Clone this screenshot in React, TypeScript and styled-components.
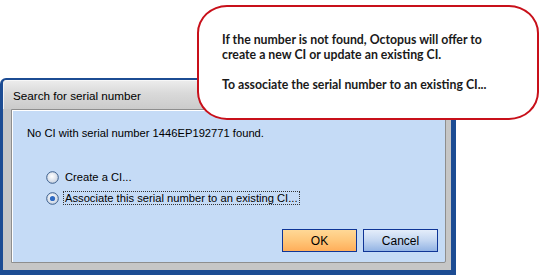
import styled, { createGlobalStyle } from "styled-components";
import { FC } from "react";

const GlobalStyle = createGlobalStyle`
    html, body {
        margin: 0;
        padding: 0;
        background: #ffffff;
    }
`

const Radio: FC<{ checked?: boolean }> = ({checked}) => (<RadioSvg width={13} height={13} viewBox="0 0 13 13">
    <defs>
        <radialGradient id={checked ? "rg-on" : "rg-off"} cx="0.45" cy="0.4" r="0.6">
            <stop offset="0" stopColor="#ffffff"/>
            <stop offset="1" stopColor="#c9d3e2"/>
        </radialGradient>
    </defs>
    <circle cx={6.5} cy={6.5} r={5.8} fill={`url(#${checked ? "rg-on" : "rg-off"})`} stroke="#3c5f8c" strokeWidth={1}/>
    {checked && <circle cx={6.5} cy={6.5} r={2.6} fill="#2f6ac2"/>}
</RadioSvg>)

export default function App() {
    return (<>
        <GlobalStyle/>
        <Page>
            <Window>
                <TitleBar>Search for serial number</TitleBar>
                <Panel>
                    <Message>No CI with serial number 1446EP192771 found.</Message>
                    <Options>
                        <Option>
                            <Radio/>
                            <OptionLabel>Create a CI...</OptionLabel>
                        </Option>
                        <Option>
                            <Radio checked/>
                            <OptionLabel $focused>Associate this serial number to an existing CI...</OptionLabel>
                        </Option>
                    </Options>
                    <Buttons>
                        <Button $primary>OK</Button>
                        <Button>Cancel</Button>
                    </Buttons>
                </Panel>
            </Window>
            <Callout>
                <p>If the number is not found, Octopus will offer to<br/>create a new CI or update an existing CI.</p>
                <p>To associate the serial number to an existing CI...</p>
            </Callout>
        </Page>
    </>)
}

const Page = styled.div`
    position: relative;
    width: 557px;
    height: 275px;
    overflow: hidden;
    padding-top: 78px;
    box-sizing: border-box;
    background: #ffffff;
`

const Window = styled.div`
    width: 456px;
    height: 197px;
    box-sizing: border-box;
    border-style: solid;
    border-color: #1c4c93;
    border-width: 2px 5px 5px 3px;
    border-top-left-radius: 6px;
    background: #c6c6c6;
    padding: 0 5px 0 8px;
    display: flex;
    flex-direction: column;
`

const TitleBar = styled.div`
    height: 29px;
    margin: 0 -5px 0 -8px;
    padding-left: 9px;
    display: flex;
    align-items: center;
    border-top-left-radius: 4px;
    background: linear-gradient(#ececec, #d9d9d9 45%, #cbcbcb);
    border-top: 1px solid #f7f7f7;
    border-left: 1px solid #f2f2f2;
    box-sizing: border-box;
    font-family: "Liberation Sans", Arial, sans-serif;
    font-size: 11.7px;
    color: #000;
`

const Panel = styled.div`
    height: 154px;
    flex: none;
    box-sizing: border-box;
    background: #c5dbf6;
    border: 1px solid #8e8e8e;
    border-bottom-right-radius: 2px;
    box-shadow: inset 1px 1px 0 #ffffff;
    padding: 16px 7px 0 15px;
    display: flex;
    flex-direction: column;
    font-family: "Liberation Sans", Arial, sans-serif;
    font-size: 11.2px;
    color: #000;
`

const Message = styled.div`
    line-height: 15px;
`

const Options = styled.div`
    margin-top: 29px;
    padding-left: 19px;
    display: flex;
    flex-direction: column;
    gap: 7px;
`

const Option = styled.div`
    display: flex;
    align-items: center;
    gap: 5px;
    height: 14px;
`

const RadioSvg = styled.svg`
    flex: none;
`

const OptionLabel = styled.span<{ $focused?: boolean }>`
    padding: 0 1px;
    line-height: 12px;
    outline: ${p => p.$focused ? "1px dotted #333" : "none"};
`

const Buttons = styled.div`
    margin-top: 24px;
    display: flex;
    justify-content: flex-end;
    gap: 6px;
`

const Button = styled.div<{ $primary?: boolean }>`
    width: 75px;
    height: 23px;
    box-sizing: border-box;
    display: flex;
    align-items: center;
    justify-content: center;
    font-size: 12px;
    border: 1px solid #0f3596;
    background: ${p => p.$primary
        ? "linear-gradient(#ffd896, #ffc679 50%, #ffae5a)"
        : "linear-gradient(#e4edfa, #c3d6f1 50%, #93b4e4)"};
    color: #000;
`

const Callout = styled.div`
    position: absolute;
    left: 197px;
    top: 5px;
    width: 342px;
    height: 115px;
    box-sizing: border-box;
    background: #ffffff;
    border: 2px solid #c8101a;
    border-radius: 30px / 28px;
    padding: 25px 0 0 23px;
    font-family: Lato, "Open Sans", sans-serif;
    font-weight: 700;
    font-size: 12.3px;
    line-height: 15px;
    color: #1a1a1a;

    p {
        margin: 0 0 15px;
    }
`
